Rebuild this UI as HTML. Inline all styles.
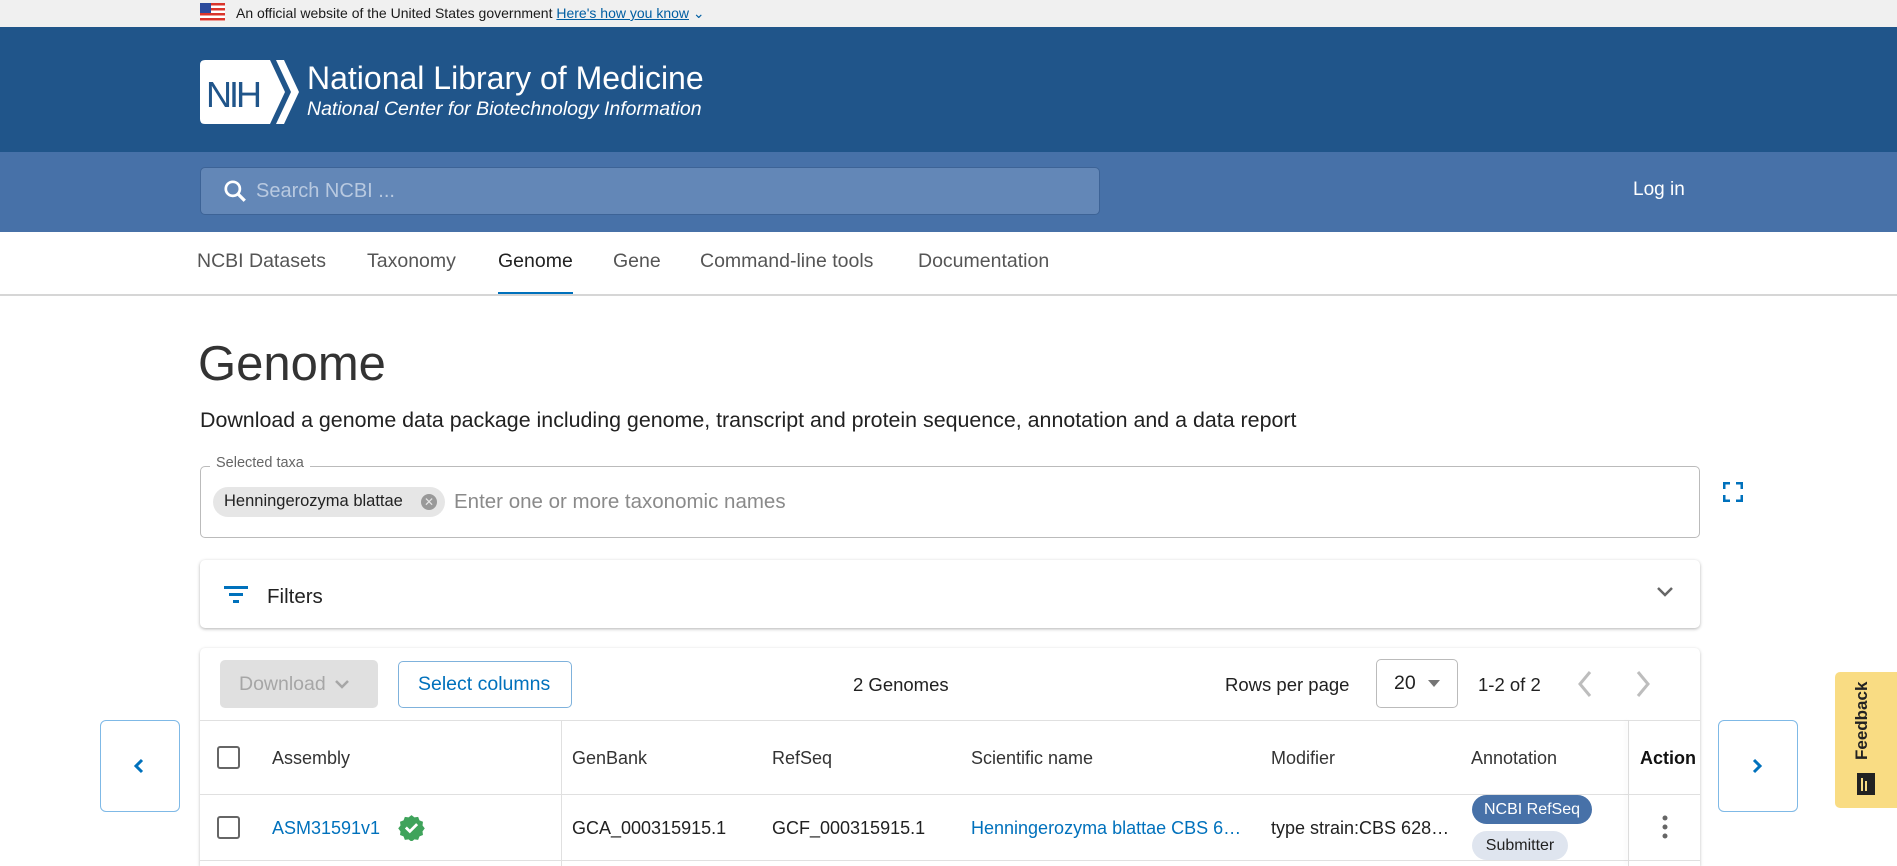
<!DOCTYPE html>
<html style="overflow:hidden;height:866px"><head><meta charset="utf-8"><style>
*{box-sizing:border-box;margin:0;padding:0}
body{width:1897px;height:866px;overflow:hidden;font-family:"Liberation Sans",sans-serif;background:#fff;position:relative;color:#212121}
.a{position:absolute;white-space:nowrap}
.nav{font-size:19.5px;color:#555;top:250px}
.th{font-size:18px;color:#333;top:748px}
.td{font-size:18px;color:#212121;top:818px}
.cb{position:absolute;width:23px;height:23px;border:2.5px solid #666;border-radius:3px}
</style></head><body>
<div class="a" style="left:0;top:0;width:1897px;height:27px;background:#f0f0f0"></div>
<svg class="a" style="left:200px;top:3px" width="25" height="18" viewBox="0 0 25 18"><rect width="25" height="18" fill="#fff"/><g fill="#d9342b"><rect y="0" width="25" height="2.5"/><rect y="5" width="25" height="2.5"/><rect y="10" width="25" height="2.5"/><rect y="15" width="25" height="2.5"/></g><rect width="11" height="10" fill="#2b4a9c"/></svg>
<div class="a" style="left:236px;top:5px;font-size:14px;color:#1b1b1b">An official website of the United States government <span style="color:#005ea2;text-decoration:underline">Here's how you know</span> <span style="color:#005ea2">&#8964;</span></div>
<div class="a" style="left:0;top:27px;width:1897px;height:125px;background:#20558a"></div>
<svg class="a" style="left:200px;top:60px" width="100" height="64" viewBox="0 0 100 64"><path d="M5 0H70L85 32 70 64H5Q0 64 0 59V5Q0 0 5 0Z" fill="#fff"/><path d="M76 0H84L99 32 84 64H76L91 32Z" fill="#fff"/><text x="6" y="47" font-family="Liberation Sans" font-size="36" fill="#20558a" letter-spacing="-3">NIH</text></svg>
<div class="a" style="left:307px;top:60px;font-size:32px;color:#fff">National Library of Medicine</div>
<div class="a" style="left:307px;top:98px;font-size:19.5px;color:#fff;font-style:italic">National Center for Biotechnology Information</div>
<div class="a" style="left:0;top:152px;width:1897px;height:80px;background:#4771a8"></div>
<div class="a" style="left:200px;top:167px;width:900px;height:48px;background:#6387b7;border-radius:5px;border:1px solid #3d6396"></div>
<svg class="a" style="left:222px;top:178px" width="26" height="26" viewBox="0 0 24 24"><circle cx="10" cy="10" r="6.5" stroke="#fff" stroke-width="2.5" fill="none"/><path d="M15 15l6 6" stroke="#fff" stroke-width="3"/></svg>
<div class="a" style="left:256px;top:180px;font-size:20px;color:#b8c9e0">Search NCBI ...</div>
<div class="a" style="left:1633px;top:179px;font-size:19px;color:#fff">Log in</div>
<div class="a nav" style="left:197px">NCBI Datasets</div>
<div class="a nav" style="left:367px">Taxonomy</div>
<div class="a nav" style="left:498px;color:#212121">Genome</div>
<div class="a nav" style="left:613px">Gene</div>
<div class="a nav" style="left:700px">Command-line tools</div>
<div class="a nav" style="left:918px">Documentation</div>
<div class="a" style="left:498px;top:292px;width:75px;height:4px;background:#0071bc"></div>
<div class="a" style="left:0;top:294px;width:1897px;height:2px;background:#d6d6d6"></div>
<div class="a" style="left:198px;top:336px;font-size:49px;color:#333">Genome</div>
<div class="a" style="left:200px;top:408px;font-size:21.4px;color:#212121">Download a genome data package including genome, transcript and protein sequence, annotation and a data report</div>
<div class="a" style="left:200px;top:466px;width:1500px;height:72px;border:1px solid #bbb;border-radius:5px"></div>
<div class="a" style="left:210px;top:455px;padding:0 6px;background:#fff;font-size:14.5px;color:#666">Selected taxa</div>
<div class="a" style="left:213px;top:487px;width:232px;height:30px;background:#e6e6e6;border-radius:15px"></div>
<div class="a" style="left:224px;top:492px;font-size:16.5px;color:#222">Henningerozyma blattae</div>
<div class="a" style="left:421px;top:494px;width:16px;height:16px;border-radius:8px;background:#999;color:#e6e6e6;font-size:12px;line-height:16px;text-align:center">✕</div>
<div class="a" style="left:454px;top:490px;font-size:20.5px;color:#8a8a8a">Enter one or more taxonomic names</div>
<svg class="a" style="left:1723px;top:482px" width="20" height="20" viewBox="0 0 20 20" fill="none" stroke="#0071bc" stroke-width="3"><path d="M1 7V1H7M13 1H19V7M19 13V19H13M7 19H1V13"/></svg>
<div class="a" style="left:200px;top:560px;width:1500px;height:68px;border-radius:5px;box-shadow:0 1px 3px rgba(0,0,0,.3)"></div>
<svg class="a" style="left:224px;top:586px" width="24" height="18"><g fill="#0071bc"><rect x="0" y="0" width="24" height="3"/><rect x="5" y="7" width="14" height="3"/><rect x="9" y="14" width="6" height="3"/></g></svg>
<div class="a" style="left:267px;top:585px;font-size:20.5px;color:#222">Filters</div>
<svg class="a" style="left:1656px;top:586px" width="18" height="12"><path d="M2 2l7 7 7-7" stroke="#666" stroke-width="2.5" fill="none"/></svg>
<div class="a" style="left:200px;top:648px;width:1500px;height:218px;border-radius:5px 5px 0 0;box-shadow:0 1px 3px rgba(0,0,0,.25)"></div>
<div class="a" style="left:220px;top:660px;width:158px;height:48px;background:#e0e0e0;border-radius:5px"></div>
<div class="a" style="left:239px;top:673px;font-size:19.5px;color:#a6a6a6">Download</div>
<svg class="a" style="left:334px;top:679px" width="16" height="11"><path d="M2 2l6 6 6-6" stroke="#a6a6a6" stroke-width="2.5" fill="none"/></svg>
<div class="a" style="left:398px;top:661px;width:174px;height:47px;border:1px solid #7fb2dc;border-radius:5px"></div>
<div class="a" style="left:418px;top:673px;font-size:19.5px;color:#0071bc">Select columns</div>
<div class="a" style="left:853px;top:674px;font-size:18.5px;color:#212121">2 Genomes</div>
<div class="a" style="left:1225px;top:674px;font-size:18.5px;color:#212121">Rows per page</div>
<div class="a" style="left:1376px;top:659px;width:82px;height:49px;border:1px solid #bbb;border-radius:5px"></div>
<div class="a" style="left:1394px;top:672px;font-size:19.5px;color:#212121">20</div>
<svg class="a" style="left:1428px;top:680px" width="12" height="7"><path d="M0 0h12L6 7z" fill="#757575"/></svg>
<div class="a" style="left:1478px;top:674px;font-size:18.5px;color:#212121">1-2 of 2</div>
<svg class="a" style="left:1574px;top:670px" width="80" height="28" fill="none" stroke="#bdbdbd" stroke-width="3"><path d="M16 2L6 14 16 26M64 2L74 14 64 26"/></svg>
<div class="a" style="left:200px;top:720px;width:1500px;height:1px;background:#e0e0e0"></div>
<div class="a" style="left:200px;top:794px;width:1500px;height:1px;background:#e0e0e0"></div>
<div class="a" style="left:200px;top:860px;width:1500px;height:1px;background:#e0e0e0"></div>
<div class="a" style="left:561px;top:720px;width:1px;height:146px;background:#e0e0e0"></div>
<div class="a" style="left:1628px;top:720px;width:1px;height:146px;background:#ddd;box-shadow:-2px 0 4px rgba(0,0,0,.08)"></div>
<div class="cb" style="left:217px;top:746px"></div>
<div class="cb" style="left:217px;top:816px"></div>
<div class="a th" style="left:272px">Assembly</div>
<div class="a th" style="left:572px">GenBank</div>
<div class="a th" style="left:772px">RefSeq</div>
<div class="a th" style="left:971px">Scientific name</div>
<div class="a th" style="left:1271px">Modifier</div>
<div class="a th" style="left:1471px">Annotation</div>
<div class="a th" style="left:1640px;font-weight:bold;color:#111">Action</div>
<div class="a td" style="left:272px;color:#0071bc">ASM31591v1</div>
<svg class="a" style="left:398px;top:814px" width="27" height="27" viewBox="0 0 24 24"><path d="M12 1l2.6 2 3.3-.4 1.2 3.1 3.1 1.2-.4 3.3 2 2.6-2 2.6.4 3.3-3.1 1.2-1.2 3.1-3.3-.4-2.6 2-2.6-2-3.3.4-1.2-3.1-3.1-1.2.4-3.3-2-2.6 2-2.6-.4-3.3 3.1-1.2 1.2-3.1 3.3.4z" fill="#3fa35b"/><path d="M7 12l3.5 3.5L17 9" stroke="#fff" stroke-width="2.5" fill="none"/></svg>
<div class="a td" style="left:572px">GCA_000315915.1</div>
<div class="a td" style="left:772px">GCF_000315915.1</div>
<div class="a td" style="left:971px;color:#0071bc">Henningerozyma blattae CBS 6…</div>
<div class="a td" style="left:1271px">type strain:CBS 628…</div>
<div class="a" style="left:1472px;top:795px;width:120px;height:29px;background:#4771a8;border-radius:15px;color:#fff;font-size:16px;line-height:29px;text-align:center">NCBI RefSeq</div>
<div class="a" style="left:1472px;top:831px;width:96px;height:29px;background:#dfe5ef;border-radius:15px;color:#222;font-size:16px;line-height:29px;text-align:center">Submitter</div>
<svg class="a" style="left:1662px;top:815px" width="6" height="26"><g fill="#666"><circle cx="3" cy="3" r="2.5"/><circle cx="3" cy="12" r="2.5"/><circle cx="3" cy="21" r="2.5"/></g></svg>
<div class="a" style="left:100px;top:720px;width:80px;height:92px;border:1px solid #7fb9e6;border-radius:6px;background:#fff"></div>
<svg class="a" style="left:133px;top:758px" width="12" height="16"><path d="M9 2L3 8l6 6" stroke="#0071bc" stroke-width="3" fill="none"/></svg>
<div class="a" style="left:1718px;top:720px;width:80px;height:92px;border:1px solid #7fb9e6;border-radius:6px;background:#fff"></div>
<svg class="a" style="left:1751px;top:758px" width="12" height="16"><path d="M3 2l6 6-6 6" stroke="#0071bc" stroke-width="3" fill="none"/></svg>
<div class="a" style="left:1835px;top:672px;width:62px;height:136px;background:#f9dc83;border-radius:5px 0 0 5px"></div>
<div class="a" style="left:1852px;top:760px;font-size:17px;font-weight:bold;color:#222;transform:rotate(-90deg);transform-origin:0 0">Feedback</div>
<svg class="a" style="left:1856px;top:772px" width="20" height="24"><rect x="1" y="1" width="18" height="22" fill="#222"/><rect x="5" y="6" width="2" height="13" fill="#f9dc83"/><rect x="9" y="9" width="2" height="10" fill="#f9dc83"/></svg>
</body></html>
